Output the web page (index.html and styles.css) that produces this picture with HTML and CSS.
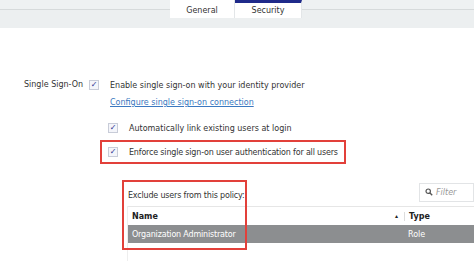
FILE: index.html
```html
<!DOCTYPE html>
<html lang="en">
<head>
  <meta charset="utf-8">
  <title>Security</title>
  <link rel="stylesheet" href="styles.css">
</head>
<body>
  <div class="topbar">
    <div class="tabs">
      <div class="tab">General</div>
      <div class="tab active">Security</div>
    </div>
  </div>

  <div class="sso">
    <div class="sso-label">Single Sign-On</div>
    <div class="sso-body">
      <div class="check-row">
        <span class="check">&#10003;</span>
        <span>Enable single sign-on with your identity provider</span>
      </div>
      <a class="link" href="#">Configure single sign-on connection</a>
    </div>
  </div>

  <div class="options">
    <div class="check-row opt">
      <span class="check">&#10003;</span>
      <span>Automatically link existing users at login</span>
    </div>
    <div class="check-row opt highlight">
      <span class="check">&#10003;</span>
      <span class="tight">Enforce single sign-on user authentication for all users</span>
    </div>
  </div>

  <div class="exclude">
    <div class="exclude-head">
      <div class="exclude-title tight">Exclude users from this policy:</div>
      <div class="filter">
        <svg width="8" height="8" viewBox="0 0 8 8"><circle cx="3.2" cy="3.2" r="2.2" fill="none" stroke="#555" stroke-width="1.2"/><path d="M4.8 4.8 L7.2 7.2" stroke="#555" stroke-width="1.4"/></svg>
        <span>Filter</span>
      </div>
    </div>
    <div class="grid">
      <div class="grid-head">
        <div class="col-name">Name <span class="sort">&#9652;</span></div>
        <div class="col-type">Type</div>
      </div>
      <div class="grid-row">
        <div class="col-name tight">Organization Administrator</div>
        <div class="col-type">Role</div>
      </div>
    </div>
    <div class="red-box"></div>
  </div>
</body>
</html>
```

FILE: styles.css
```css
body {
  margin: 0;
  font-family: "DejaVu Sans", Verdana, sans-serif;
  font-size: 8px;
  color: #333;
  background: white;
  overflow: hidden;
  white-space: nowrap;
}

.tight {
  letter-spacing: -0.18px;
}

.topbar {
  height: 28px;
  background: linear-gradient(#eef1f2 0, #eef1f2 9px, #d6dadb 9px, #d6dadb 10px, #eceff0 10px);
}

.tabs {
  display: flex;
  padding-left: 170px;
}

.tab {
  width: 65px;
  height: 18px;
  box-sizing: border-box;
  padding-top: 6px;
  background: white;
  text-align: center;
  border-right: 1px solid #e3e6e8;
}

.tab.active {
  width: 67px;
  border-top: 3px solid #1f2a8a;
  padding-top: 3px;
}

.sso {
  display: flex;
  margin-top: 51px;
  padding-left: 24px;
}

.sso-label {
  width: 65px;
  padding-top: 1px;
}

.check-row {
  display: flex;
  align-items: center;
  gap: 11px;
  height: 12px;
}

.check {
  width: 10px;
  height: 10px;
  box-sizing: border-box;
  border: 1px solid #c8ccd8;
  background: #f4f5fa;
  color: #2a3590;
  font-size: 8px;
  line-height: 8px;
  text-align: center;
}

.link {
  display: block;
  margin-top: 7px;
  margin-left: 21px;
  color: #3b78c0;
  text-decoration: underline;
}

.options {
  margin-top: 9px;
  margin-left: 100px;
}

.opt {
  width: 246px;
  box-sizing: border-box;
  padding-left: 8px;
  height: 24px;
}

.highlight {
  border: 2px solid #e2403a;
  padding-left: 6px;
}

.exclude {
  position: relative;
  margin-top: 18px;
  margin-left: 127px;
}

.exclude-head {
  display: flex;
  justify-content: space-between;
  align-items: center;
  height: 24px;
}

.exclude-title {
  padding-left: 1px;
  padding-top: 2px;
}

.filter {
  width: 55px;
  height: 19px;
  margin-bottom: 4px;
  box-sizing: border-box;
  border: 1px solid #e2e4e6;
  display: flex;
  align-items: center;
  gap: 3px;
  padding-left: 5px;
  color: #999;
  font-style: italic;
}

.grid {
  border-left: 1px solid #eee;
  height: 60px;
}

.grid-head, .grid-row {
  display: flex;
  height: 18px;
  align-items: center;
}

.grid-head {
  font-weight: bold;
  color: #222;
  border-top: 1px solid #e6e6e6;
}

.grid-row {
  background: #8c8e90;
  color: white;
}

.col-name {
  width: 276px;
  padding-left: 4px;
  display: flex;
  justify-content: space-between;
  padding-right: 6px;
  box-sizing: border-box;
}

.grid-head .col-type {
  border-left: 1px solid #ddd;
}

.col-type {
  padding-left: 4px;
}

.sort {
  font-size: 6px;
}

.red-box {
  position: absolute;
  left: -5px;
  top: -2px;
  width: 125px;
  height: 70px;
  box-sizing: border-box;
  border: 2px solid #e2403a;
  pointer-events: none;
}
```
